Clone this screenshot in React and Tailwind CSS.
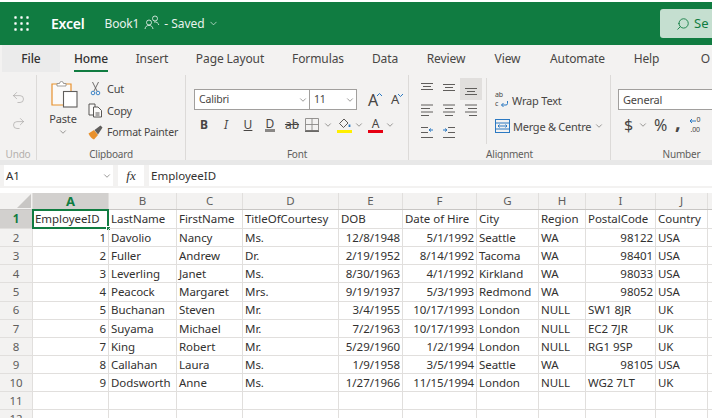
import React from 'react';
import { Undo2, Redo2, ChevronDown, Search } from 'lucide-react';

const columns = [
  { name: 'A', width: 'w-[76px]' },
  { name: 'B', width: 'w-[68px]' },
  { name: 'C', width: 'w-[66px]' },
  { name: 'D', width: 'w-[96px]' },
  { name: 'E', width: 'w-[64px]' },
  { name: 'F', width: 'w-[74px]' },
  { name: 'G', width: 'w-[62px]' },
  { name: 'H', width: 'w-[47px]' },
  { name: 'I', width: 'w-[70px]' },
  { name: 'J', width: 'w-[52px]' },
  { name: '', width: 'w-[11px]' },
];

const rows = [
  ['EmployeeID', 'LastName', 'FirstName', 'TitleOfCourtesy', 'DOB', 'Date of Hire', 'City', 'Region', 'PostalCode', 'Country'],
  ['1', 'Davolio', 'Nancy', 'Ms.', '12/8/1948', '5/1/1992', 'Seattle', 'WA', '98122', 'USA'],
  ['2', 'Fuller', 'Andrew', 'Dr.', '2/19/1952', '8/14/1992', 'Tacoma', 'WA', '98401', 'USA'],
  ['3', 'Leverling', 'Janet', 'Ms.', '8/30/1963', '4/1/1992', 'Kirkland', 'WA', '98033', 'USA'],
  ['4', 'Peacock', 'Margaret', 'Mrs.', '9/19/1937', '5/3/1993', 'Redmond', 'WA', '98052', 'USA'],
  ['5', 'Buchanan', 'Steven', 'Mr.', '3/4/1955', '10/17/1993', 'London', 'NULL', 'SW1 8JR', 'UK'],
  ['6', 'Suyama', 'Michael', 'Mr.', '7/2/1963', '10/17/1993', 'London', 'NULL', 'EC2 7JR', 'UK'],
  ['7', 'King', 'Robert', 'Mr.', '5/29/1960', '1/2/1994', 'London', 'NULL', 'RG1 9SP', 'UK'],
  ['8', 'Callahan', 'Laura', 'Ms.', '1/9/1958', '3/5/1994', 'Seattle', 'WA', '98105', 'USA'],
  ['9', 'Dodsworth', 'Anne', 'Ms.', '1/27/1966', '11/15/1994', 'London', 'NULL', 'WG2 7LT', 'UK'],
  [],
  [],
];

const tabs = [
  { label: 'Home', width: 'w-[34px]' },
  { label: 'Insert', width: 'w-[30px]' },
  { label: 'Page Layout', width: 'w-[68px]' },
  { label: 'Formulas', width: 'w-[50px]' },
  { label: 'Data', width: 'w-[26px]' },
  { label: 'Review', width: 'w-[38px]' },
  { label: 'View', width: 'w-[27px]' },
  { label: 'Automate', width: 'w-[55px]' },
  { label: 'Help', width: 'w-[25px]' },
];

const isRightAligned = (value, colIndex) =>
  (colIndex === 0 && value !== 'EmployeeID') ||
  (colIndex === 4 && value !== 'DOB') ||
  (colIndex === 5 && value !== 'Date of Hire') ||
  (colIndex === 8 && /^\d+$/.test(value));

function AlignIcon({ lines, active, children }) {
  return (
    <div className={`w-[22px] h-[22px] flex items-center justify-center ${active ? 'bg-[#e1dfdd]' : ''}`}>
      <svg width="14" height="14" viewBox="0 0 14 14" stroke="#605e5c" strokeWidth="1" fill="none">
        {lines.map((l, i) => (
          <line key={i} x1={l[0]} x2={l[1]} y1={l[2]} y2={l[2]} />
        ))}
        {children}
      </svg>
    </div>
  );
}

function Chevron({ size = 10 }) {
  return <ChevronDown size={size} strokeWidth={1.5} className="text-[#605e5c] shrink-0" />;
}

function GroupLabel({ children }) {
  return <div className="text-[10px] leading-[12px] text-[#605e5c] text-center mt-auto">{children}</div>;
}

export default function App() {
  return (
    <div className="w-[712px] h-[420px] overflow-hidden bg-white flex flex-col pt-[2px] font-['Noto_Sans',sans-serif] text-[#323130]">
      {/* Title bar */}
      <div className="h-[43px] shrink-0 bg-[#107c41] flex items-center text-white">
        <svg className="ml-[14px]" width="15" height="15" viewBox="0 0 15 15" fill="#fff">
          {[1.5, 7.5, 13.5].map((y) =>
            [1.5, 7.5, 13.5].map((x) => <rect key={`${x}-${y}`} x={x - 1.2} y={y - 1.2} width="2.4" height="2.4" rx="0.6" />)
          )}
        </svg>
        <span className="ml-[22px] text-[14px] font-semibold tracking-[-0.2px]">Excel</span>
        <span className="ml-[20px] text-[12px] tracking-[-0.2px] opacity-90">Book1</span>
        <svg className="ml-[5px] mb-[3px]" width="16" height="15" viewBox="0 0 16 15" fill="none" stroke="#fff" strokeWidth="0.9" opacity="0.85">
          <circle cx="5" cy="7.5" r="2.5" />
          <path d="M1 14c.4-2.6 2-3.6 4-3.6s3.6 1 4 3.6" />
          <circle cx="11" cy="3.5" r="2.5" />
          <path d="M10 7c2.5-.4 4.3.8 4.8 3" />
        </svg>
        <span className="ml-[4px] text-[12px] opacity-90">- Saved</span>
        <ChevronDown className="ml-[3px] opacity-90" size={11} strokeWidth={1.5} />
        <div className="ml-auto w-[53px] h-[29px] -mr-[1px] rounded-l-[3px] bg-[#c5dfd0] flex items-center pl-[16px] text-[#107c41]">
          <Search size={14} strokeWidth={1.5} className="-scale-x-100" />
          <span className="ml-[4px] text-[13px]">Se</span>
        </div>
      </div>

      {/* Tabs */}
      <div className="h-[30px] shrink-0 bg-[#f3f2f1] flex text-[12px] tracking-[-0.1px] pr-[2px]">
        <div className="ml-[2px] w-[58px] h-[27px] bg-[#ebebeb] flex items-center justify-center font-medium">File</div>
        <div className="ml-[14px] flex gap-[29px]">
          {tabs.map((t, i) => (
            <div key={t.label} className={`${t.width} h-[27px] relative flex items-center justify-center whitespace-nowrap ${i === 0 ? 'font-medium' : 'text-[#484644]'}`}>
              {t.label}
              {i === 0 && <div className="absolute left-0 right-0 bottom-0 h-[2px] bg-[#107c41]" />}
            </div>
          ))}
        </div>
        <div className="ml-auto text-[#484644] leading-[27px]">O</div>
      </div>

      {/* Ribbon */}
      <div className="h-[85px] shrink-0 bg-[#f3f2f1] flex text-[10.5px] tracking-[-0.2px] leading-none text-[#484644]">
        {/* Undo */}
        <div className="w-[37px] shrink-0 border-r border-[#dcdad8] flex flex-col items-center text-[#a19f9d]">
          <Undo2 size={15} strokeWidth={1} className="mt-[15px]" />
          <Redo2 size={15} strokeWidth={1} className="mt-[11px]" />
          <GroupLabel><span className="text-[#b3b0ad]">Undo</span></GroupLabel>
        </div>

        {/* Clipboard */}
        <div className="w-[149px] shrink-0 border-r border-[#dcdad8] flex flex-col">
          <div className="flex">
            <div className="w-[51px] shrink-0 flex flex-col items-center pl-[1px]">
              <svg width="27" height="27" viewBox="0 0 27 27" className="mt-[6px] ml-[3px]">
                <path d="M1 3h19v21H1z" fill="#fbfaf9" stroke="#e8912d" strokeWidth="1.2" />
                <path d="M6 5V2.5h2.5a2 2 0 0 1 4 0H15V5z" fill="#fff" stroke="#8a8886" strokeWidth="0.8" />
                <rect x="12.5" y="10.5" width="13.5" height="15.5" fill="#fff" stroke="#605e5c" strokeWidth="1.1" />
              </svg>
              <div className="mt-[5px] text-[11px]">Paste</div>
              <div className="mt-[3px]"><Chevron /></div>
            </div>
            <div className="flex flex-col mt-[6px] gap-[7px] whitespace-nowrap">
              <div className="flex items-center h-[15px]">
                <svg width="15" height="15" viewBox="0 0 15 15" fill="none" strokeWidth="0.9">
                  <path d="M4.5 1l4.5 9M10.5 1L6 10" stroke="#605e5c" />
                  <circle cx="5" cy="12" r="1.8" stroke="#2b79c2" />
                  <circle cx="10" cy="12" r="1.8" stroke="#2b79c2" />
                </svg>
                <span className="ml-[4px] text-[11px]">Cut</span>
              </div>
              <div className="flex items-center h-[15px]">
                <svg width="15" height="15" viewBox="0 0 15 15" fill="#fbfaf9" stroke="#484644" strokeWidth="0.9">
                  <path d="M1 1h6v11H1z" />
                  <path d="M5.5 4h4.5l3.5 3.5V14h-8z" />
                  <path d="M7.5 10h4M7.5 12h4" />
                </svg>
                <span className="ml-[4px] text-[11px]">Copy</span>
              </div>
              <div className="flex items-center h-[15px]">
                <svg width="15" height="15" viewBox="0 0 15 15">
                  <path d="M.5 8.5L6 5l4 5-4 4.5C4 14 2 11.5 .5 8.5z" fill="#e8912d" />
                  <path d="M6.5 5l6-4.5 2 2L10 9.5z" fill="#605e5c" />
                </svg>
                <span className="ml-[4px]">Format Painter</span>
              </div>
            </div>
          </div>
          <GroupLabel>Clipboard</GroupLabel>
        </div>

        {/* Font */}
        <div className="w-[223px] shrink-0 border-r border-[#dcdad8] flex flex-col">
          <div className="flex items-center mt-[14px] ml-[8px]">
            <div className="w-[163px] h-[21px] flex border border-[#a19f9d] bg-white shrink-0">
              <div className="w-[115px] shrink-0 pl-[4px] pr-[1px] flex items-center justify-between border-r border-[#a19f9d]"><span>Calibri</span><Chevron /></div>
              <div className="flex-1 pl-[4px] pr-[1px] flex items-center justify-between"><span>11</span><Chevron /></div>
            </div>
            <div className="relative w-[22px] text-center text-[16px] ml-[5px]">
              A
              <svg className="absolute right-[1px] top-0" width="7" height="5" viewBox="0 0 7 5" fill="none" stroke="#2b79c2"><path d="M1 4l2.5-2.5L6 4" /></svg>
            </div>
            <div className="relative w-[20px] text-center text-[13px] ml-[1px]">
              A
              <svg className="absolute right-[1px] top-0" width="7" height="5" viewBox="0 0 7 5" fill="none" stroke="#2b79c2"><path d="M1 1l2.5 2.5L6 1" /></svg>
            </div>
          </div>
          <div className="flex items-center ml-[7px] mt-[4px] h-[22px] text-[12px] tracking-normal">
            <div className="w-[22px] text-center font-bold">B</div>
            <div className="w-[22px] text-center italic">I</div>
            <div className="w-[22px] text-center underline">U</div>
            <div className="w-[22px] flex flex-col items-center">
              <span className="leading-[11px] underline">D</span>
              <div className="w-[10px] h-[3px] bg-[#8a8886]" />
            </div>
            <div className="w-[22px] text-center line-through">ab</div>
            <svg className="ml-[1px]" width="16" height="14" viewBox="0 0 16 14" fill="none" stroke="#8a8886" strokeWidth="0.9">
              <path d="M1.5 .5h13v12h-13zM8 .5v12M1.5 6.5h13" />
              <path d="M1 13.2h14" stroke="#484644" strokeWidth="1.2" />
            </svg>
            <div className="ml-[3px]"><Chevron /></div>
            <div className="ml-[4px] w-[15px] flex flex-col items-center">
              <svg width="13" height="11" viewBox="0 0 13 11" fill="none" stroke="#484644" strokeWidth="0.9">
                <path d="M6 1L1.5 5.5 5.5 9.5 10 5z" />
                <path d="M11.5 6.5v2.5" stroke="#2b79c2" strokeWidth="1.8" />
              </svg>
              <div className="w-[15px] h-[3px] mt-[1px] bg-[#ffef00]" />
            </div>
            <div className="ml-[2px]"><Chevron /></div>
            <div className="ml-[4px] w-[15px] flex flex-col items-center">
              <span className="leading-[11px]">A</span>
              <div className="w-[15px] h-[3px] mt-[1px] bg-[#e60012]" />
            </div>
            <div className="ml-[2px]"><Chevron /></div>
          </div>
          <GroupLabel>Font</GroupLabel>
        </div>

        {/* Alignment */}
        <div className="w-[202px] shrink-0 border-r border-[#dcdad8] flex flex-col">
          <div className="flex">
            <div className="grid grid-cols-3 w-[66px] ml-[7px] mt-[3px]">
              <AlignIcon lines={[[1, 13, 1.5], [3, 11, 4.5], [1, 13, 7.5]]} />
              <AlignIcon lines={[[1, 13, 2.5], [3, 11, 5.5], [1, 13, 8.5]]} />
              <AlignIcon active lines={[[1, 13, 6.5], [3, 11, 9.5], [1, 13, 12.5]]} />
              <AlignIcon lines={[[1, 13, 1], [1, 10, 4.5], [1, 13, 8], [1, 9, 11.5]]} />
              <AlignIcon lines={[[1, 13, 1], [3, 11, 4.5], [1, 13, 8], [3, 11, 11.5]]} />
              <AlignIcon lines={[[1, 13, 1], [4, 13, 4.5], [1, 13, 8], [5, 13, 11.5]]} />
              <AlignIcon lines={[[1, 8, 1.5], [1, 8, 6.5], [1, 13, 11.5]]}>
                <path d="M13 4H9M11 2.5L9 4l2 1.5" stroke="#2b79c2" />
              </AlignIcon>
              <AlignIcon lines={[[6, 13, 1.5], [6, 13, 6.5], [1, 13, 11.5]]}>
                <path d="M1 4h4M3 2.5L5 4 3 5.5" stroke="#2b79c2" />
              </AlignIcon>
            </div>
            <div className="ml-[4px] w-[1px] h-[66px] mt-[3px] bg-[#dcdad8]" />
            <div className="ml-[8px] mt-[17px] flex flex-col gap-[10px] whitespace-nowrap">
              <div className="flex items-center h-[16px]">
                <div className="relative w-[14px] h-[16px] text-[7px] text-[#484644]">
                  <span className="absolute left-0 -top-[2px] leading-[9px]">ab</span>
                  <span className="absolute left-0 top-[7px] leading-[9px]">c</span>
                  <svg className="absolute right-0 bottom-0" width="9" height="8" viewBox="0 0 9 8" fill="none" stroke="#2b79c2" strokeWidth="1">
                    <path d="M7.5 1v2.5A1.5 1.500 0 0 1 6 5H1.5M3.500 3L1.5 5l2 2" />
                  </svg>
                </div>
                <span className="ml-[3px] text-[11px]">Wrap Text</span>
              </div>
              <div className="flex items-center h-[16px]">
                <svg width="15" height="14" viewBox="0 0 15 14" fill="none" stroke="#2b79c2" strokeWidth="1">
                  <rect x="0.5" y="0.5" width="14" height="13" />
                  <path d="M.5 4h14M.5 10h14M3 7h9M4.5 5.5L3 7l1.5 1.5M10.5 5.5L12 7l-1.5 1.5" />
                </svg>
                <span className="ml-[3px] text-[11px] tracking-[-0.25px]">Merge &amp; Centre</span>
                <div className="ml-[3px]"><Chevron /></div>
              </div>
            </div>
          </div>
          <GroupLabel>Alignment</GroupLabel>
        </div>

        {/* Number */}
        <div className="w-[134px] shrink-0 flex flex-col pl-[7px]">
          <div className="mt-[14px] h-[21px] w-[127px] border border-[#a19f9d] bg-white pl-[4px] flex items-center text-[11px]">General</div>
          <div className="flex items-center mt-[5px] text-[#484644] h-[20px]">
            <span className="ml-[6px] text-[16px] w-[10px]">$</span>
            <div className="ml-[4px]"><Chevron /></div>
            <span className="ml-[6px] text-[16px]">%</span>
            <span className="ml-[8px] text-[20px] font-bold leading-[14px] -mt-[6px]">,</span>
            <div className="ml-[8px] relative w-[18px] h-[16px] text-[7px]">
              <svg className="absolute left-0 top-0" width="8" height="8" viewBox="0 0 8 8" fill="none" stroke="#2b79c2"><path d="M7 4H1M3 2L1 4l2 2" /></svg>
              <span className="absolute left-[8px] -top-[2px] leading-[10px]">0</span>
              <span className="absolute left-[2px] top-[8px] leading-[10px]">.00</span>
            </div>
          </div>
          <GroupLabel>Number</GroupLabel>
        </div>
      </div>

      <div className="h-[5px] shrink-0 bg-[#e8e8e8]" />

      {/* Formula bar */}
      <div className="h-[23px] shrink-0 bg-[#f3f2f1] flex items-start gap-[5px] pl-[4px] text-[11.5px]">
        <div className="w-[109px] h-[21px] bg-white flex items-center justify-between pl-[2px] pr-[1px]">
          <span>A1</span>
          <Chevron />
        </div>
        <div className="w-[26px] h-[21px] bg-white flex items-center justify-center font-['Liberation_Serif',serif] italic text-[13px]">fx</div>
        <div className="flex-1 h-[21px] bg-white pl-[2px] leading-[22px]">EmployeeID</div>
      </div>

      <div className="h-[5px] shrink-0 bg-white" />

      {/* Sheet */}
      <div className="h-[225px] shrink-0 overflow-hidden text-[11.5px] tracking-[-0.05px] leading-none">
        <div className="flex h-[17px] bg-[#f3f2f1] border-b border-[#c8c6c4]">
          <div className="w-[33px] shrink-0 relative border-r border-[#e1dfdd]">
            <svg className="absolute right-[1px] bottom-[1px]" width="14" height="14" viewBox="0 0 14 14"><path d="M14 0v14H0z" fill="#c8c6c4" /></svg>
          </div>
          {columns.map((c, i) => (
            <div key={i} className={`${c.width} shrink-0 flex items-center justify-center border-r border-[#e1dfdd] ${i === 0 ? 'bg-[#d2d0ce] text-[#107c41] font-bold text-[13px]' : 'text-[#605e5c]'}`}>
              {c.name}
            </div>
          ))}
        </div>
        {rows.map((row, r) => (
          <div key={r} className={`flex ${r === 0 ? 'h-[19px]' : 'h-[18.15px]'}`}>
            <div className={`w-[33px] shrink-0 flex items-center justify-center border-b border-r border-[#e1dfdd] ${r === 0 ? 'bg-[#d2d0ce] text-[#107c41] font-bold' : 'bg-[#f3f2f1] text-[#605e5c]'}`}>
              {r + 1}
            </div>
            {columns.map((c, i) => (
              <div key={i} className={`${c.width} shrink-0 relative flex items-center px-[2px] whitespace-nowrap border-b border-r border-[#e1dfdd] text-[#323130] ${row[i] && isRightAligned(row[i], i) ? 'justify-end' : ''}`}>
                {row[i]}
                {r === 0 && i === 0 && (
                  <>
                    <div className="absolute -left-[1px] -top-[1px] -right-[1px] -bottom-[1px] border-2 border-[#107c41]" />
                    <div className="absolute -right-[3px] -bottom-[3px] w-[5px] h-[5px] bg-[#107c41] border border-white" />
                  </>
                )}
              </div>
            ))}
          </div>
        ))}
      </div>
    </div>
  );
}
